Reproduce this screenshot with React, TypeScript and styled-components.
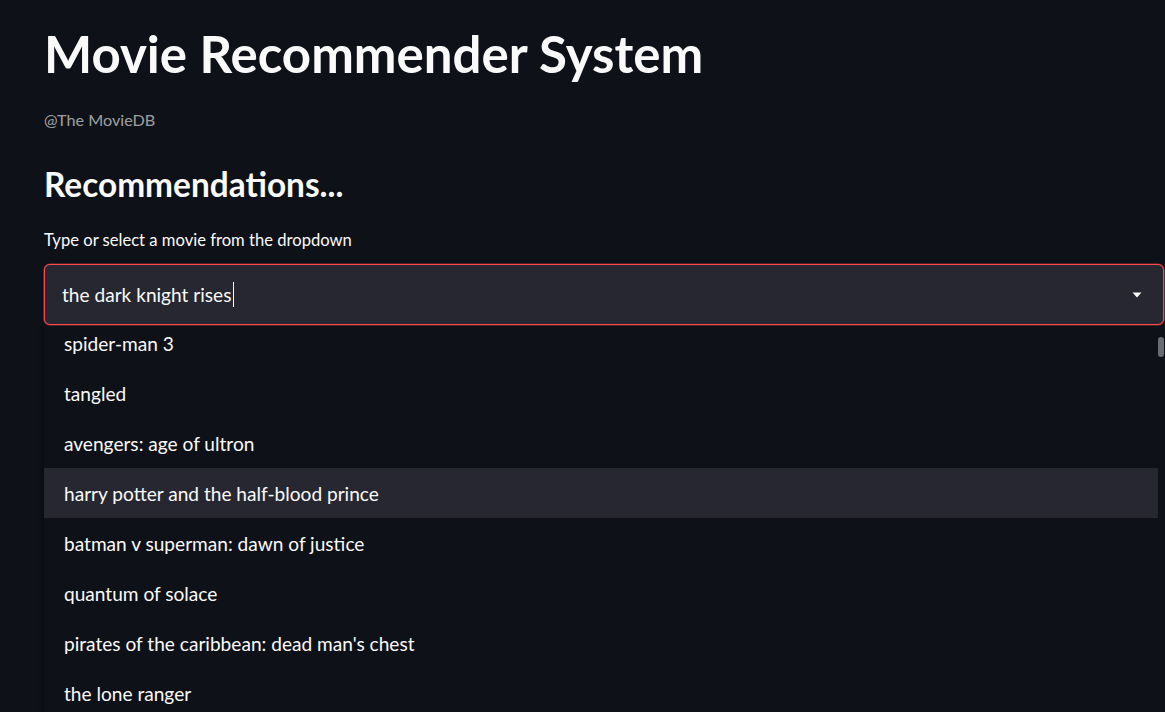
import React, { useLayoutEffect, useRef } from "react";
import styled, { createGlobalStyle } from "styled-components";

const GlobalStyle = createGlobalStyle`
  html, body {
    margin: 0;
    padding: 0;
    background: #0e1117;
    color: #fafafa;
    font-family: "Lato", "Liberation Sans", sans-serif;
    overflow: hidden;
  }
  * { box-sizing: border-box; }
`;

const Page = styled.main`
  display: flex;
  flex-direction: column;
  padding: 0 1px 0 44px;
  height: 712px;
  overflow: hidden;
`;

const Title = styled.h1`
  margin: 21px 0 0;
  font-size: 51px;
  line-height: 66px;
  font-weight: 700;
  color: #fafafa;
`;

const Caption = styled.div`
  margin-top: 21px;
  font-size: 16.2px;
  line-height: 24px;
  color: rgba(250, 250, 250, 0.62);
`;

const Subheader = styled.h3`
  margin: 31px 0 0;
  font-size: 33.4px;
  line-height: 42px;
  font-weight: 700;
  color: #fafafa;
`;

const Label = styled.label`
  margin-top: 23px;
  font-size: 16.6px;
  line-height: 24px;
  color: #fafafa;
`;

const SelectBox = styled.div`
  margin-top: 12px;
  height: 61px;
  display: flex;
  align-items: center;
  padding: 0 21px 0 17px;
  background: #262730;
  border: 1px solid #ff4b4b;
  box-shadow: 0 0 0 0.6px rgba(255, 75, 75, 0.55);
  border-radius: 6px;
  position: relative;
  z-index: 2;
`;

const InputText = styled.span`
  font-size: 19.1px;
  color: #fafafa;
  display: flex;
  align-items: center;
`;

const Cursor = styled.span`
  display: inline-block;
  width: 1px;
  height: 25px;
  margin-left: 2px;
  background: #fafafa;
`;

const Caret = styled.svg`
  margin-left: auto;
  width: 10px;
  height: 6px;
  flex-shrink: 0;
`;

const ListWrap = styled.div`
  position: relative;
  flex: 1;
  min-height: 0;
  background: #0f1118;
  box-shadow: -2px 0 4px rgba(0, 0, 0, 0.35);
`;

const List = styled.ul`
  list-style: none;
  margin: 0;
  padding: 0 6px 0 0;
  height: 100%;
  overflow: hidden;
`;

const Option = styled.li<{ $active?: boolean }>`
  height: 50px;
  display: flex;
  align-items: center;
  padding-left: 20px;
  font-size: 19.1px;
  color: #fafafa;
  background: ${(p) => (p.$active ? "#262730" : "transparent")};
`;

const Thumb = styled.div`
  position: absolute;
  right: 0;
  top: 12px;
  width: 6px;
  height: 20px;
  border-radius: 3px;
  background: #6c6d72;
`;

const movies = [
  "spider-man 3",
  "tangled",
  "avengers: age of ultron",
  "harry potter and the half-blood prince",
  "batman v superman: dawn of justice",
  "quantum of solace",
  "pirates of the caribbean: dead man's chest",
  "the lone ranger",
];

export default function App() {
  const listRef = useRef<HTMLUListElement>(null);
  useLayoutEffect(() => {
    if (listRef.current) listRef.current.scrollTop = 7;
  }, []);
  return (
    <>
      <GlobalStyle />
      <Page>
        <Title>Movie Recommender System</Title>
        <Caption>@The MovieDB</Caption>
        <Subheader>Recommendations...</Subheader>
        <Label>Type or select a movie from the dropdown</Label>
        <SelectBox>
          <InputText>
            the dark knight rises
            <Cursor />
          </InputText>
          <Caret viewBox="0 0 10 6">
            <path d="M0.5 0.5 L9.5 0.5 L5 5.5 Z" fill="#fafafa" />
          </Caret>
        </SelectBox>
        <ListWrap>
          <List ref={listRef}>
            {movies.map((m) => (
              <Option key={m} $active={m.startsWith("harry")}>
                {m}
              </Option>
            ))}
          </List>
          <Thumb />
        </ListWrap>
      </Page>
    </>
  );
}
